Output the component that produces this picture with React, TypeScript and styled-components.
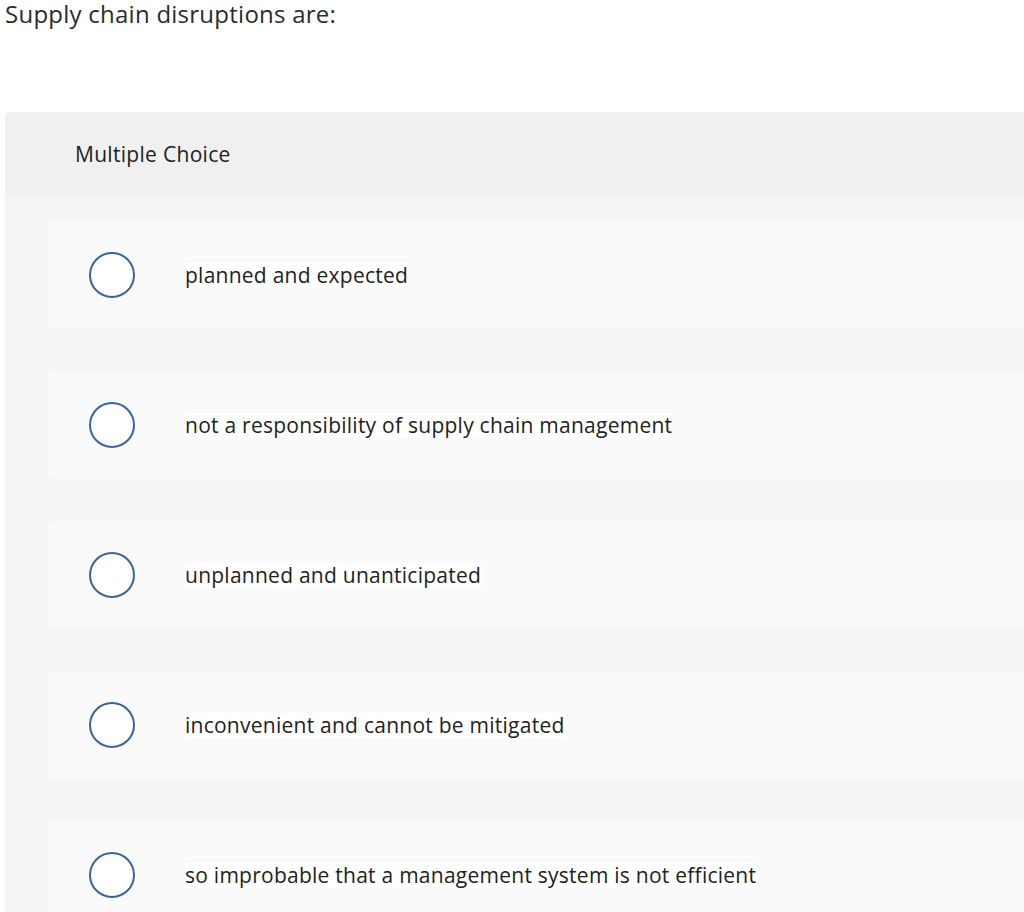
import styled, { createGlobalStyle } from "styled-components";

const options = [
  "planned and expected",
  "not a responsibility of supply chain management",
  "unplanned and unanticipated",
  "inconvenient and cannot be mitigated",
  "so improbable that a management system is not efficient",
];

export default function App() {
  return (
    <>
      <GlobalStyle />
      <Page>
        <Question>Supply chain disruptions are:</Question>
        <Panel>
          <PanelHeader>Multiple Choice</PanelHeader>
          <OptionList>
            {options.map((text) => (
              <OptionCard key={text}>
                <Radio />
                <OptionText>{text}</OptionText>
              </OptionCard>
            ))}
          </OptionList>
        </Panel>
      </Page>
    </>
  );
}

const GlobalStyle = createGlobalStyle`
  html, body {
    margin: 0;
    padding: 0;
    overflow: hidden;
    background: #fff;
  }
  body {
    font-family: "Open Sans", Lato, sans-serif;
    color: #222;
  }
`;

const Page = styled.div`
  width: 1024px;
  height: 912px;
  overflow: hidden;
`;

const Question = styled.div`
  padding: 0 0 0 5px;
  height: 112px;
  font-size: 24px;
  line-height: 27px;
  letter-spacing: 0.25px;
  color: #2b2b2b;
`;

const Panel = styled.div`
  margin-left: 5px;
  width: 1100px;
  background: #f5f5f5;
  border-radius: 5px 0 0 0;
`;

const PanelHeader = styled.div`
  display: flex;
  align-items: center;
  height: 83px;
  padding-left: 70px;
  background: #f0f0f0;
  border-radius: 5px 0 0 0;
  font-size: 21px;
  letter-spacing: 0.3px;
  color: #222;
`;

const OptionList = styled.div`
  display: flex;
  flex-direction: column;
  gap: 42px;
  padding: 26px 0 40px 43px;
`;

const OptionCard = styled.div`
  display: flex;
  align-items: center;
  height: 108px;
  padding-left: 41px;
  background: #fafafa;
  border-radius: 5px 0 0 5px;
`;

const Radio = styled.span`
  box-sizing: border-box;
  width: 46px;
  height: 46px;
  flex: none;
  border: 2px solid #3b6599;
  border-radius: 50%;
  background: #fff;
`;

const OptionText = styled.span`
  margin-left: 50px;
  background: #fff;
  font-size: 21px;
  line-height: 25px;
  letter-spacing: 0.25px;
  color: #222;
`;
